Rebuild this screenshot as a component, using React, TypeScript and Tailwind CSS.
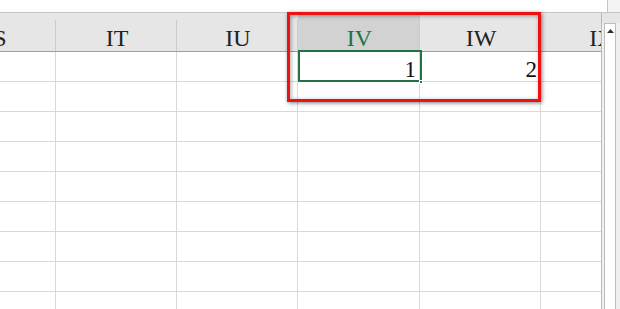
const COLS = [
  { label: "IS", w: "w-[121px] -ml-[65px]" },
  { label: "IT", w: "w-[121px]" },
  { label: "IU", w: "w-[121px]" },
  { label: "IV", w: "w-[122px]", sel: true },
  { label: "IW", w: "w-[121px]" },
  { label: "IX", w: "w-[121px]" },
];

const ROWS = 9;

const serif = { fontFamily: '"Liberation Serif", "Times New Roman", serif' };

export default function App() {
  return (
    <div className="relative h-[309px] w-[620px] overflow-hidden bg-white" style={serif}>
      {/* formula bar strip */}
      <div className="flex h-[13px] border-b border-[#c6c6c6]">
        <div className="flex-1 border-r border-[#c6c6c6]" />
        <div className="w-[12px] bg-[#f3f3f3]" />
      </div>

      <div className="flex">
        {/* grid */}
        <div className="w-[602px] shrink-0 overflow-hidden border-r border-[#b9b9b9]">
          <div className="flex h-[39px] border-b border-[#9e9e9e] bg-[#e6e6e6]">
            {COLS.map((c) => (
              <div
                key={c.label}
                className={`${c.w} relative shrink-0 flex justify-center pt-[13px] pl-[1px] text-[24px] leading-none after:absolute after:right-0 after:top-[7px] after:bottom-0 after:w-px after:bg-[#cbcbcb] ${
                  c.sel ? "bg-[#d2d2d2] text-[#217346]" : "text-[#222]"
                }`}
              >
                {c.label}
              </div>
            ))}
          </div>
          {Array.from({ length: ROWS }).map((_, r) => (
            <div key={r} className="flex h-[30px] border-b border-[#d9d9d9]">
              {COLS.map((c) => (
                <div
                  key={c.label}
                  className={`${c.w} shrink-0 flex justify-end pr-[3px] pt-[6px] text-[23px] leading-none text-[#111] border-r border-[#d9d9d9]`}
                >
                  {r === 0 && c.label === "IV" ? "1" : r === 0 && c.label === "IW" ? "2" : ""}
                </div>
              ))}
            </div>
          ))}
        </div>

        {/* vertical scrollbar */}
        <div className="flex flex-1 flex-col">
          <div className="h-[10px] bg-[#e6e6e6]" />
          <div className="flex flex-1">
            <div className="w-[2px] bg-[#f0f0f0]" />
            <div className="flex w-[12px] flex-col border-x border-t border-[#bdbdbd] bg-white">
              <div className="flex h-[14px] items-center justify-center">
                <svg width="7" height="4" viewBox="0 0 7 4">
                  <path d="M0 4 L3.5 0 L7 4 Z" fill="#333" />
                </svg>
              </div>
            </div>
            <div className="flex-1 bg-[#f0f0f0]" />
          </div>
        </div>
      </div>

      {/* active cell selection */}
      <div className="absolute left-[298px] top-[50px] h-[32px] w-[124px] border-2 border-[#217346]" />
      <div className="absolute left-[419px] top-[80px] h-[4px] w-[4px] border border-white bg-[#217346]" />

      {/* red annotation box */}
      <div className="absolute left-[287px] top-[12px] h-[90px] w-[254px] border-[3px] border-[#ee1111] shadow-[1px_1px_4px_rgba(0,0,0,0.5),inset_1px_1px_4px_rgba(0,0,0,0.35)]" />
    </div>
  );
}
